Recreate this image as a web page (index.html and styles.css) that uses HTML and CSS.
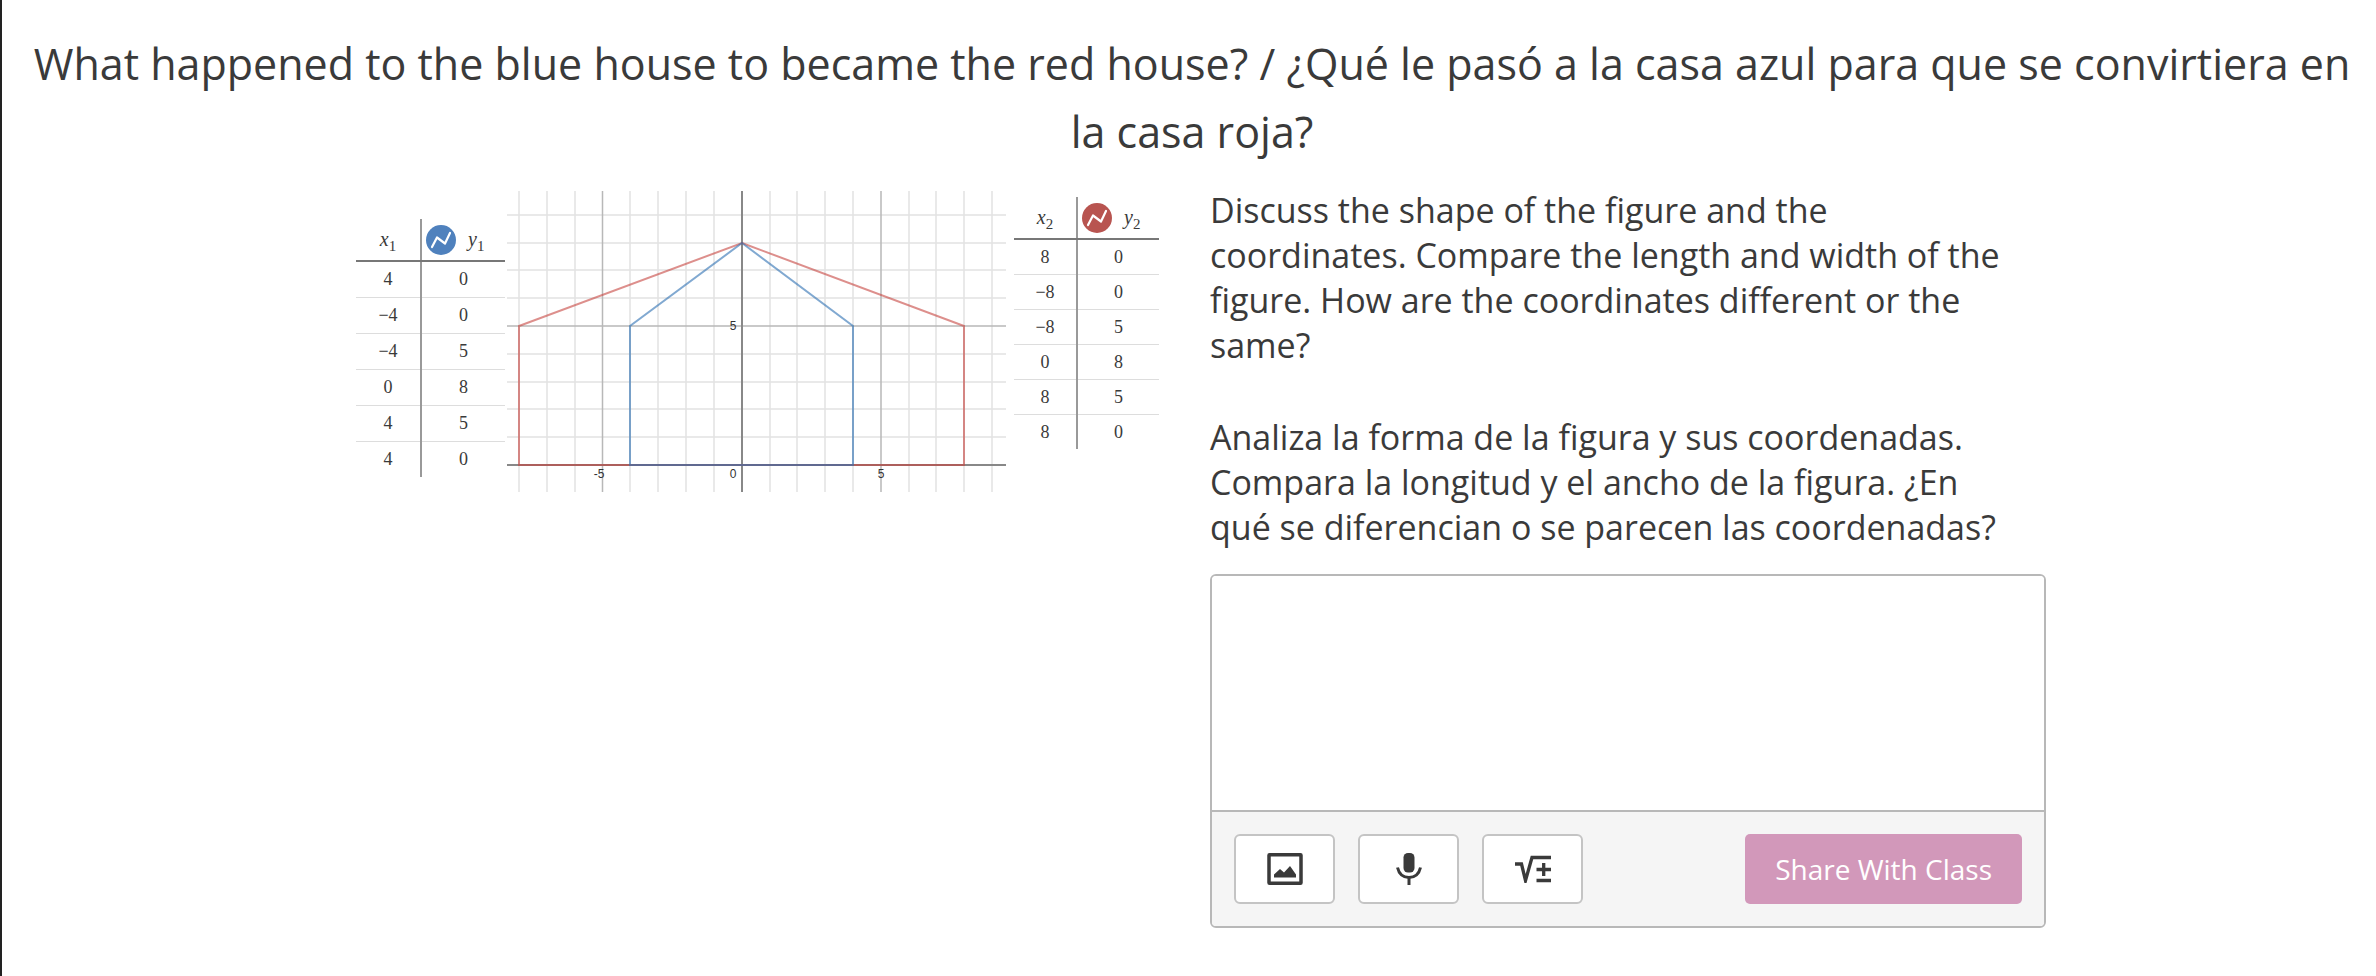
FILE: index.html
```html
<!DOCTYPE html>
<html lang="en">
<head>
    <meta charset="UTF-8">
    <meta name="viewport" content="width=device-width, initial-scale=1.0">
    <title>Blue house, red house</title>
    <link rel="stylesheet" href="styles.css">
</head>
<body>
    <main class="screen">
        <h1 class="title">What happened to the blue house to became the red house? / ¿Qué le pasó a la casa azul para que se convirtiera en la casa roja?</h1>

        <div class="columns">
            <!-- Tables and graph -->
            <div class="figure">
                <table class="points points-blue">
                    <thead>
                        <tr>
                            <th><i>x</i><sub>1</sub></th>
                            <th>
                                <div class="head-y">
                                    <svg class="badge" viewBox="0 0 30 30" aria-hidden="true">
                                        <circle cx="15" cy="15" r="15" fill="#4f81bd"/>
                                        <path d="M6 22L11 12.500L19 18.500L24 8" fill="none" stroke="#fff" stroke-width="2.200" stroke-linecap="round" stroke-linejoin="round"/>
                                    </svg>
                                    <span><i>y</i><sub>1</sub></span>
                                </div>
                            </th>
                        </tr>
                    </thead>
                    <tbody>
                        <tr><td>4</td><td>0</td></tr>
                        <tr><td>−4</td><td>0</td></tr>
                        <tr><td>−4</td><td>5</td></tr>
                        <tr><td>0</td><td>8</td></tr>
                        <tr><td>4</td><td>5</td></tr>
                        <tr><td>4</td><td>0</td></tr>
                    </tbody>
                </table>

                <svg class="graph" viewBox="0 0 499 301" role="img" aria-label="Blue house and red house on a coordinate grid">
                    <g class="grid-minor">
                        <path d="M12 0V301M40 0V301M68 0V301M123 0V301M151 0V301M179 0V301M207 0V301M263 0V301M290 0V301M318 0V301M346 0V301M402 0V301M429 0V301M457 0V301M485 0V301"/>
                        <path d="M0 24H499M0 52H499M0 79H499M0 107H499M0 163H499M0 191H499M0 218H499M0 246H499"/>
                    </g>
                    <path class="grid-major" d="M95.500 0V301M374 0V301M0 135H499"/>
                    <path class="axis" d="M235 0V301M0 274H499"/>
                    <path class="house-red" d="M235 52L457 135V274H12V135Z"/>
                    <path class="house-blue" d="M235 52L346 135V274H123V135Z"/>
                    <g class="ticks">
                        <text x="92" y="287">-5</text>
                        <text x="226" y="287">0</text>
                        <text x="374" y="287">5</text>
                        <text x="226" y="139">5</text>
                    </g>
                </svg>

                <table class="points points-red">
                    <thead>
                        <tr>
                            <th><i>x</i><sub>2</sub></th>
                            <th>
                                <div class="head-y">
                                    <svg class="badge" viewBox="0 0 30 30" aria-hidden="true">
                                        <circle cx="15" cy="15" r="15" fill="#b85450"/>
                                        <path d="M6 22L11 12.500L19 18.500L24 8" fill="none" stroke="#fff" stroke-width="2.200" stroke-linecap="round" stroke-linejoin="round"/>
                                    </svg>
                                    <span><i>y</i><sub>2</sub></span>
                                </div>
                            </th>
                        </tr>
                    </thead>
                    <tbody>
                        <tr><td>8</td><td>0</td></tr>
                        <tr><td>−8</td><td>0</td></tr>
                        <tr><td>−8</td><td>5</td></tr>
                        <tr><td>0</td><td>8</td></tr>
                        <tr><td>8</td><td>5</td></tr>
                        <tr><td>8</td><td>0</td></tr>
                    </tbody>
                </table>
            </div>

            <!-- Prompt and answer box -->
            <div class="response">
                <div class="prompt" id="prompt">
                    <p>Discuss the shape of the figure and the coordinates. Compare the length and width of the figure. How are the coordinates different or the same?</p>
                    <p lang="es">Analiza la forma de la figura y sus coordenadas. Compara la longitud y el ancho de la figura. ¿En qué se diferencian o se parecen las coordenadas?</p>
                </div>

                <form class="answer">
                    <textarea class="answer-text" aria-labelledby="prompt"></textarea>
                    <div class="toolbar">
                        <button type="button" class="tool" aria-label="Add image">
                            <svg width="36" height="32" viewBox="0 0 36 32">
                                <rect x="2" y="1.750" width="32" height="28.500" rx="0.500" fill="none" stroke="#3a3a3a" stroke-width="3.500"/>
                                <path d="M7 24.500V21.500L13 16L17 19.500L23 13L29 21.500V24.500Z" fill="#3a3a3a"/>
                            </svg>
                        </button>
                        <button type="button" class="tool" aria-label="Record audio">
                            <svg width="26" height="32" viewBox="0 0 26 32">
                                <rect x="7.500" y="0" width="11" height="19.500" rx="4.500" fill="#3a3a3a"/>
                                <path d="M1.500 14.500C3 21 7.500 24.500 13 24.500S23 21 24.500 14.500M13 24.500V32" fill="none" stroke="#3a3a3a" stroke-width="3"/>
                            </svg>
                        </button>
                        <button type="button" class="tool" aria-label="Add math">
                            <svg width="36" height="28" viewBox="0 0 36 28">
                                <path d="M0 9H6.500L10.500 25.500L17 2.500H36M21.500 14.500H36M28.700 8V21M21.500 25.500H36" fill="none" stroke="#3a3a3a" stroke-width="3.300"/>
                            </svg>
                        </button>
                        <button type="submit" class="share">Share With Class</button>
                    </div>
                </form>
            </div>
        </div>
    </main>
</body>
</html>
```
FILE: styles.css
```css
* {
    margin: 0;
    padding: 0;
    box-sizing: border-box;
}

:root {
    --text-color: #3a3a3a;
    --border-color: #b8b8b8;
    --share-color: #d298ba;
}

body {
    background-color: #fff;
    color: var(--text-color);
    font-family: "Open Sans", "Noto Sans", sans-serif;
}

.screen {
    min-height: 100vh;
    padding: 30px 24px;
    border-left: 2px solid #222;
}

.title {
    padding-left: 6px;
    font-size: 43px;
    font-weight: 400;
    line-height: 68px;
    text-align: center;
}

.columns {
    display: grid;
    grid-template-columns: 1fr 1fr;
    gap: 42px;
    max-width: 1714px;
    margin: 22px auto 0;
}

/* Tables and graph */
.figure {
    display: flex;
    align-items: flex-start;
    padding: 3px 9px 0 24px;
}

.points {
    border-collapse: collapse;
    table-layout: fixed;
    flex: none;
    font-family: "Liberation Serif", serif;
    font-size: 18px;
    line-height: 20px;
    text-align: center;
}

.points-blue {
    width: 149px;
    margin: 28px 2px 0 0;
}

.points-red {
    width: 145px;
    margin: 6px 0 0 8px;
}

.points th {
    height: 42px;
    font-weight: 400;
    border-bottom: 2px solid #777;
}

.points td {
    height: 36px;
    border-bottom: 1px solid #ddd;
}

.points-red td {
    height: 35px;
}

.points tr:last-child td {
    border-bottom: 0;
}

.points tr > :first-child {
    width: 65px;
    border-right: 2px solid #999;
}

.points-red tr > :first-child {
    width: 63px;
}

.points i {
    font-size: 20px;
}

.points sub {
    font-size: 15px;
    line-height: 0;
}

.head-y {
    display: flex;
    align-items: center;
    gap: 12px;
    padding-left: 4px;
}

.badge {
    width: 30px;
    height: 30px;
}

.graph {
    flex: 1;
    min-width: 0;
    fill: none;
}

.grid-minor {
    stroke: #e2e2e2;
    stroke-width: 1.500;
}

.grid-major {
    stroke: #b8b8b8;
    stroke-width: 1.500;
}

.axis {
    stroke: #888;
    stroke-width: 2;
}

.house-red {
    stroke: #c74440;
    stroke-opacity: 0.6;
    stroke-width: 2;
}

.house-blue {
    stroke: #2d70b3;
    stroke-opacity: 0.6;
    stroke-width: 2;
}

.ticks {
    fill: #333;
    font-family: "Liberation Sans", sans-serif;
    font-size: 12px;
    text-anchor: middle;
}

/* Prompt and answer box */
.prompt {
    padding-right: 32px;
    font-size: 34px;
    line-height: 45px;
}

.prompt p + p {
    margin-top: 47px;
}

.answer {
    margin-top: 24px;
    border: 2px solid var(--border-color);
    border-radius: 6px;
    overflow: hidden;
}

.answer-text {
    display: block;
    width: 100%;
    height: 234px;
    padding: 16px 22px;
    border: 0;
    outline: 0;
    resize: none;
    color: inherit;
    font: inherit;
    font-size: 34px;
}

.toolbar {
    display: flex;
    gap: 23px;
    padding: 22px;
    background-color: #f5f5f5;
    border-top: 2px solid var(--border-color);
}

.tool {
    display: flex;
    align-items: center;
    justify-content: center;
    width: 101px;
    height: 70px;
    background-color: #fff;
    border: 2px solid #c4c4c4;
    border-radius: 6px;
    cursor: pointer;
}

.share {
    height: 70px;
    margin-left: auto;
    padding: 0 30px;
    background-color: var(--share-color);
    border: 0;
    border-radius: 5px;
    color: #fff;
    font-family: inherit;
    font-size: 28px;
    cursor: pointer;
}

@media (max-width: 1400px) {
    .columns {
        grid-template-columns: 1fr;
    }
}
```
